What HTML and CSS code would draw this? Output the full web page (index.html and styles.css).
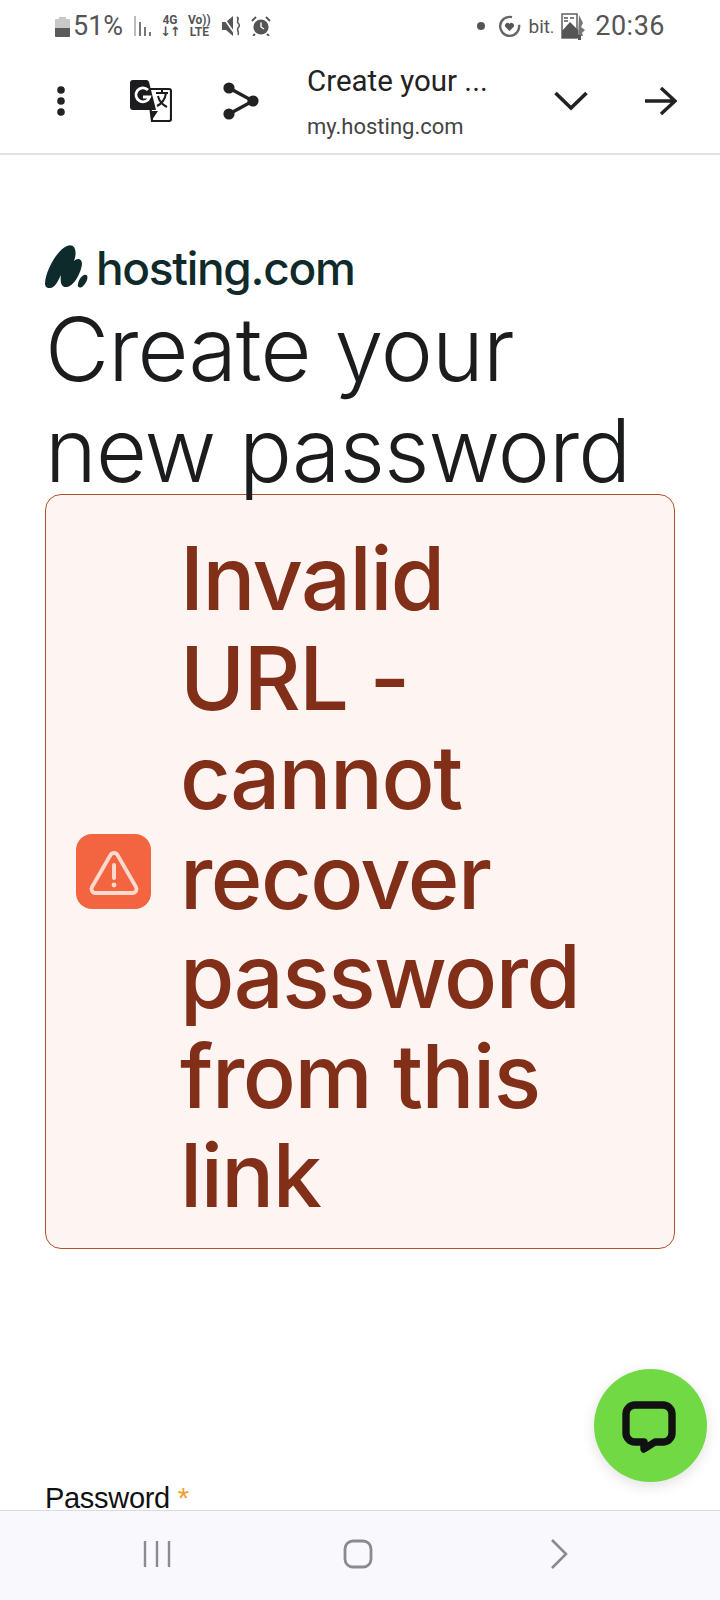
FILE: index.html
```html
<!DOCTYPE html>
<html lang="en">
<head>
    <meta charset="UTF-8">
    <title>Create your new password</title>
    <link rel="stylesheet" href="styles.css">
</head>
<body>
    <div class="screen">
        <div class="status-bar">
            <div class="status-group">
                <svg class="batt" width="15" height="21" viewBox="0 0 15 21"><path d="M4 1h7v2h3a1 1 0 0 1 1 1v16a1 1 0 0 1-1 1H1a1 1 0 0 1-1-1V4a1 1 0 0 1 1-1h3z" fill="#c8c8c8"/><path d="M0 12h15v8a1 1 0 0 1-1 1H1a1 1 0 0 1-1-1z" fill="#5a5a5a"/></svg>
                <span class="status-text batt-text">51%</span>
                <svg class="sig" width="18" height="20" viewBox="0 0 18 20"><g fill="#777"><rect x="0" y="0" width="2" height="20" fill="#bbb"/><rect x="5" y="6" width="2" height="14"/><rect x="10" y="11" width="2" height="9"/><rect x="15" y="16" width="2" height="4"/></g></svg>
                <span class="net-label">4G<br><span class="net-arrows">↓↑</span></span>
                <span class="net-label">Vo))<br>LTE</span>
                <svg class="mute" width="20" height="20" viewBox="0 0 20 20"><path d="M0 6h4l7-6v20l-7-6H0z" fill="#555"/><path d="M1 1l12 17" stroke="#fff" stroke-width="1.6"/><path d="M15 1c3 2-1 4 1 6s2 3 0 5 2 4 0 7" fill="none" stroke="#555" stroke-width="1.6"/></svg>
                <svg class="alarm" width="20" height="20" viewBox="0 0 20 20"><circle cx="10" cy="11" r="7.6" fill="#555"/><path d="M10 6.500V11l3 2" fill="none" stroke="#fff" stroke-width="1.400"/><path d="M1 5l4-4M19 5l-4-4M4 18l-2 2M16 18l2 2" stroke="#555" stroke-width="1.800"/></svg>
            </div>
            <div class="status-group">
                <span class="dot"></span>
                <svg class="gap-left" width="23" height="23" viewBox="0 0 23 23"><path d="M14 2.200a9.500 9.500 0 1 0 7 7.500" fill="none" stroke="#666" stroke-width="2.400"/><path d="M11.500 16l-4-4a2.400 2.400 0 0 1 4-3 2.400 2.400 0 0 1 4 3z" fill="#555"/></svg>
                <span class="bit">bit<small>.</small></span>
                <svg width="27" height="27" viewBox="0 0 25 27"><rect x="1" y="1" width="15" height="24" fill="#fff" stroke="#555" stroke-width="1.400"/><path d="M1 25V18L9 9l8 8v8z" fill="#555"/><path d="M3 5h4M3 8h4M9 5h4" stroke="#555" stroke-width="1.400"/><path d="M18 2l4 8-2 4 4 3-3 3 1 3h-5z" fill="#777"/><rect x="17" y="22" width="3" height="5" fill="#555"/></svg>
                <span class="status-text clock">20:36</span>
            </div>
        </div>

        <div class="toolbar">
            <svg class="tool-icon" width="12" height="32" viewBox="0 0 12 32"><g fill="#222"><circle cx="6" cy="5" r="3.800"/><circle cx="6" cy="16" r="3.800"/><circle cx="6" cy="27" r="3.800"/></g></svg>
            <svg class="tool-icon" width="42" height="42" viewBox="0 0 42 42"><path d="M18 9h21a2 2 0 0 1 2 2v28a2 2 0 0 1-2 2H22l-4-32z" fill="#fff" stroke="#1c1c1e" stroke-width="2.200"/><path d="M3 0h13a3 3 0 0 1 3 2l7 28H3a3 3 0 0 1-3-3V3a3 3 0 0 1 3-3z" fill="#1c1c1e"/><path d="M20 31l2 9 6-9z" fill="#1c1c1e"/><path d="M18 10a7 7 0 1 0 1.600 7H13" fill="none" stroke="#fff" stroke-width="2.800"/><path d="M26 13h12M32 10v3M36 13c-1 7-5 11-9 13M28 16c1 5 5 9 9 11" fill="none" stroke="#1c1c1e" stroke-width="2"/></svg>
            <svg class="tool-icon" width="36" height="38" viewBox="0 0 36 38"><path d="M6 6l24 13L6 32" fill="none" stroke="#222" stroke-width="3.400"/><g fill="#222"><circle cx="6" cy="6" r="5.600"/><circle cx="30" cy="19" r="5.600"/><circle cx="6" cy="32" r="5.600"/></g></svg>
            <div class="page-title">
                <div class="page-name">Create your ...</div>
                <div class="page-host">my.hosting.com</div>
            </div>
            <svg class="tool-icon" width="34" height="20" viewBox="0 0 34 20"><path d="M1.500 2L17 17 32.500 2" fill="none" stroke="#222" stroke-width="3.600"/></svg>
            <svg class="tool-icon" width="32" height="30" viewBox="0 0 32 30"><path d="M0 15h29M16 2l14 13-14 13" fill="none" stroke="#222" stroke-width="3.400"/></svg>
        </div>

        <div class="content">
            <div class="logo">
                <svg class="logo-mark" width="44" height="44" viewBox="0 0 44 44"><path d="M0 38C1 25 12 5 22 1C29-2 33 5 29 16C32 13 37 13 37 19C36 28 29 41 22 42C16 43 15 37 16 30C13 36 10 43 5 43C1 43 0 41 0 38z" fill="#0f2a2a"/><path d="M33 39C34 34 38 29 41 30C44 31 42 37 39 40C36 44 32 43 33 39z" fill="#0f2a2a"/></svg>
                <span class="logo-text">hosting.com</span>
            </div>
            <h1 class="heading">Create your new password</h1>
            <div class="alert">
                <div class="alert-icon">
                    <svg width="52" height="46" viewBox="0 0 52 46"><path d="M26 4a4 4 0 0 1 3.500 2l18.500 32a4 4 0 0 1-3.500 6H7.500A4 4 0 0 1 4 38L22.500 6A4 4 0 0 1 26 4z" fill="none" stroke="#fbd9cd" stroke-width="3.800" stroke-linejoin="round"/><path d="M26 16v13" stroke="#fbd9cd" stroke-width="4" stroke-linecap="round"/><circle cx="26" cy="36" r="2.400" fill="#fbd9cd"/></svg>
                </div>
                <div class="alert-text">Invalid URL - cannot recover password from this link</div>
            </div>
            <div class="field-label">Password <span class="required">*</span></div>
        </div>

        <div class="chat-button">
            <svg width="54" height="52" viewBox="0 0 54 52"><path d="M13 4h28a9 9 0 0 1 9 9v19a9 9 0 0 1-9 9H33l-11 7v-7h-9a9 9 0 0 1-9-9V13a9 9 0 0 1 9-9z" fill="none" stroke="#111" stroke-width="7.400" stroke-linejoin="round"/></svg>
        </div>

        <div class="nav-bar">
            <svg width="28" height="28" viewBox="0 0 28 28"><path d="M2 1v26M14 1v26M26 1v26" stroke="#8a8a90" stroke-width="2.400"/></svg>
            <svg width="30" height="30" viewBox="0 0 30 30"><rect x="2" y="2" width="26" height="26" rx="8" fill="none" stroke="#8a8a90" stroke-width="2.800"/></svg>
            <svg class="nav-back" width="20" height="30" viewBox="0 0 20 30"><path d="M3 1l14 14L3 29" fill="none" stroke="#8a8a90" stroke-width="2.600"/></svg>
        </div>
    </div>
</body>
</html>
```

FILE: styles.css
```css
* {
    box-sizing: border-box;
}
body {
    margin: 0;
    background: #fff;
    font-family: "Inter", "Liberation Sans", sans-serif;
    color: #1a1c1e;
}
.screen {
    position: relative;
    width: 720px;
    height: 1600px;
    overflow: hidden;
    display: flex;
    flex-direction: column;
}
.status-bar {
    height: 52px;
    flex: none;
    display: flex;
    justify-content: space-between;
    align-items: center;
    padding: 0 55px;
}
.status-group {
    display: flex;
    align-items: center;
    gap: 8px;
}
.status-text {
    font-family: "Roboto", sans-serif;
    font-size: 27px;
    color: #555;
}
.batt-text {
    margin-left: -5px;
    margin-right: 3px;
}
.net-label {
    font-family: "Roboto", sans-serif;
    font-size: 12px;
    line-height: 12px;
    font-weight: 700;
    color: #555;
    text-align: center;
}
.net-arrows {
    font-family: "DejaVu Sans", sans-serif;
    font-size: 13px;
    letter-spacing: -1px;
}
.mute {
    margin-left: 3px;
}
.alarm {
    margin-left: 1px;
}
.dot {
    width: 8px;
    height: 8px;
    border-radius: 50%;
    background: #555;
}
.gap-left {
    margin-left: 5px;
}
.bit {
    font-family: "Roboto", sans-serif;
    font-size: 19px;
    color: #555;
    margin-right: -2px;
}
.clock {
    letter-spacing: 0.5px;
}
.toolbar {
    height: 103px;
    flex: none;
    display: flex;
    align-items: center;
    padding: 0 43px 0 55px;
    border-bottom: 2px solid #e1e3e3;
}
.toolbar .tool-icon {
    flex: none;
    margin-bottom: 4px;
}
.toolbar .tool-icon:nth-child(2) {
    margin-left: 63px;
}
.toolbar .tool-icon:nth-child(3) {
    margin-left: 51px;
}
.page-title {
    flex: 1;
    margin-left: 48px;
}
.page-name {
    font-family: "Roboto", sans-serif;
    font-size: 29.500px;
    line-height: 34px;
    color: #222;
}
.page-host {
    font-family: "Roboto", sans-serif;
    font-size: 22px;
    line-height: 30px;
    margin-top: 14px;
    color: #444;
}
.toolbar .tool-icon:nth-child(6) {
    margin-left: 57px;
}
.content {
    flex: 1;
    padding: 88px 45px 0;
}
.logo {
    display: flex;
    align-items: flex-end;
    gap: 7px;
    height: 50px;
}
.logo-mark {
    margin-bottom: 4px;
}
.logo-text {
    font-size: 46px;
    line-height: 50px;
    font-weight: 500;
    letter-spacing: -1.300px;
    color: #0f2a2a;
}
.heading {
    margin: 6px 0 0;
    font-size: 88px;
    line-height: 101px;
    font-weight: 350;
    letter-spacing: -0.900px;
}
.alert {
    margin-top: -7px;
    width: 630px;
    height: 755px;
    display: flex;
    align-items: center;
    gap: 29px;
    padding: 0 30px;
    background: #fef4f1;
    border: 1px solid #b0502f;
    border-radius: 16px;
}
.alert-icon {
    flex: none;
    width: 75px;
    height: 75px;
    border-radius: 16px;
    background: #f36440;
    display: flex;
    align-items: center;
    justify-content: center;
}
.alert-text {
    width: 420px;
    padding-top: 12px;
    font-size: 88px;
    line-height: 99.500px;
    font-weight: 540;
    letter-spacing: -1.500px;
    color: #822f1a;
}
.field-label {
    margin-top: 232px;
    font-family: "Liberation Sans", sans-serif;
    font-size: 29px;
    line-height: 34px;
    letter-spacing: -0.300px;
    color: #111;
}
.required {
    color: #f0a030;
}
.chat-button {
    position: absolute;
    left: 594px;
    top: 1369px;
    width: 113px;
    height: 113px;
    padding: 2px 3px 0 0;
    border-radius: 50%;
    background: #70d944;
    box-shadow: 0 4px 14px rgba(0, 0, 0, 0.12);
    display: flex;
    align-items: center;
    justify-content: center;
}
.nav-bar {
    position: absolute;
    left: 0;
    right: 0;
    bottom: 0;
    height: 90px;
    background: #f9f9fd;
    border-top: 1px solid #dcdce0;
    display: flex;
    align-items: center;
    gap: 172px;
    padding: 0 0 4px 143px;
}
.nav-back {
    margin-left: 4px;
}
```
